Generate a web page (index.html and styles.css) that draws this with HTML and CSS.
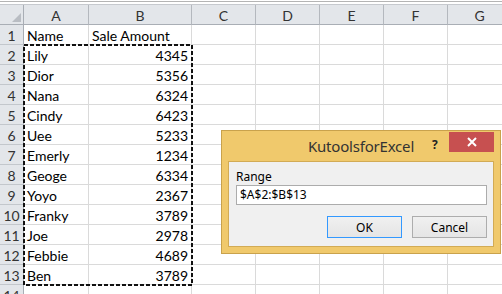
FILE: index.html
```html
<!DOCTYPE html>
<html lang="en">
<head>
  <meta charset="UTF-8">
  <title>KutoolsforExcel</title>
  <link rel="stylesheet" href="styles.css">
</head>
<body>
  <div class="sheet">
    <div class="topbar"></div>

    <div class="grid">
      <div class="corner"><span class="tri"></span></div>
      <div class="colhead">A</div>
      <div class="colhead">B</div>
      <div class="colhead">C</div>
      <div class="colhead">D</div>
      <div class="colhead">E</div>
      <div class="colhead">F</div>
      <div class="colhead">G</div>

      <div class="rowhead">1</div><div class="cell">Name</div><div class="cell">Sale Amount</div><div class="cell"></div><div class="cell"></div><div class="cell"></div><div class="cell"></div><div class="cell"></div>
      <div class="rowhead">2</div><div class="cell">Lily</div><div class="cell num">4345</div><div class="cell"></div><div class="cell"></div><div class="cell"></div><div class="cell"></div><div class="cell"></div>
      <div class="rowhead">3</div><div class="cell">Dior</div><div class="cell num">5356</div><div class="cell"></div><div class="cell"></div><div class="cell"></div><div class="cell"></div><div class="cell"></div>
      <div class="rowhead">4</div><div class="cell">Nana</div><div class="cell num">6324</div><div class="cell"></div><div class="cell"></div><div class="cell"></div><div class="cell"></div><div class="cell"></div>
      <div class="rowhead">5</div><div class="cell">Cindy</div><div class="cell num">6423</div><div class="cell"></div><div class="cell"></div><div class="cell"></div><div class="cell"></div><div class="cell"></div>
      <div class="rowhead">6</div><div class="cell">Uee</div><div class="cell num">5233</div><div class="cell"></div><div class="cell"></div><div class="cell"></div><div class="cell"></div><div class="cell"></div>
      <div class="rowhead">7</div><div class="cell">Emerly</div><div class="cell num">1234</div><div class="cell"></div><div class="cell"></div><div class="cell"></div><div class="cell"></div><div class="cell"></div>
      <div class="rowhead">8</div><div class="cell">Geoge</div><div class="cell num">6334</div><div class="cell"></div><div class="cell"></div><div class="cell"></div><div class="cell"></div><div class="cell"></div>
      <div class="rowhead">9</div><div class="cell">Yoyo</div><div class="cell num">2367</div><div class="cell"></div><div class="cell"></div><div class="cell"></div><div class="cell"></div><div class="cell"></div>
      <div class="rowhead">10</div><div class="cell">Franky</div><div class="cell num">3789</div><div class="cell"></div><div class="cell"></div><div class="cell"></div><div class="cell"></div><div class="cell"></div>
      <div class="rowhead">11</div><div class="cell">Joe</div><div class="cell num">2978</div><div class="cell"></div><div class="cell"></div><div class="cell"></div><div class="cell"></div><div class="cell"></div>
      <div class="rowhead">12</div><div class="cell">Febbie</div><div class="cell num">4689</div><div class="cell"></div><div class="cell"></div><div class="cell"></div><div class="cell"></div><div class="cell"></div>
      <div class="rowhead">13</div><div class="cell">Ben</div><div class="cell num">3789</div><div class="cell"></div><div class="cell"></div><div class="cell"></div><div class="cell"></div><div class="cell"></div>
      <div class="rowhead">14</div><div class="cell"></div><div class="cell"></div><div class="cell"></div><div class="cell"></div><div class="cell"></div><div class="cell"></div><div class="cell"></div>
    </div>

    <!-- copy marquee round A2:B13 -->
    <svg class="marquee" width="170" height="242">
      <rect x="1" y="1" width="168" height="240" fill="none" stroke="#111" stroke-width="2" stroke-dasharray="4 2"/>
    </svg>

    <div class="dialog">
      <div class="titlebar">
        <span class="title">KutoolsforExcel</span>
        <span class="help">?</span>
        <span class="close">
          <svg width="10" height="10" viewBox="0 0 10 10"><path d="M1 1 L9 9 M9 1 L1 9" stroke="#fff" stroke-width="2"/></svg>
        </span>
      </div>
      <div class="panel">
        <div class="label">Range</div>
        <div class="input">$A$2:$B$13</div>
        <div class="buttons">
          <div class="btn default">OK</div>
          <div class="btn">Cancel</div>
        </div>
      </div>
    </div>
  </div>
</body>
</html>
```

FILE: styles.css
```css
*{
  margin:0;
  padding:0;
  box-sizing: border-box;
}
body{
  width:502px;
  height:294px;
  overflow:hidden;
  background:#fff;
}
.sheet{
  position: relative;
  width:502px;
  height:294px;
  overflow:hidden;
  font-family: "Lato", "Liberation Sans", sans-serif;
}

.topbar{
  height:4px;
  border-top:1px solid #fff;
  border-bottom:1px solid #fff;
  background: linear-gradient(#b4b4b4 0 1px, #fff 1px);
}

.grid{
  display:grid;
  grid-template-columns: 24px 65px 103px 64px 64px 64px 64px 64px;
  grid-auto-rows: 20px;
  width:512px;
  border-top:1px solid #c6c9ce;
}

.corner, .colhead, .rowhead{
  background:#e3e6ea;
  color:#333;
  font-size:14px;
  display:flex;
  align-items:center;
  justify-content:center;
}
.corner{
  position: relative;
  border-right:1px solid #a9aeb5;
  border-bottom:1px solid #a9aeb5;
  height:20px;
}
.corner .tri{
  position:absolute;
  right:2px;
  bottom:2px;
  width:0;
  height:0;
  border-left:9px solid transparent;
  border-bottom:9px solid #b9bdc3;
}
.colhead{
  border-right:1px solid #b4b8be;
  border-bottom:1px solid #a9aeb5;
  padding-top:1px;
}
.rowhead{
  border-right:1px solid #a9aeb5;
  border-bottom:1px solid #c3c7cc;
  font-size:14px;
  padding-top:1px;
}

.cell{
  border-right:1px solid #dadada;
  border-bottom:1px solid #dadada;
  font-size:14px;
  color:#000;
  padding:2px 3px 0 3px;
  line-height:17px;
  white-space:nowrap;
  overflow:hidden;
}
.cell.num{
  text-align:right;
}

.marquee{
  position:absolute;
  left:23px;
  top:44px;
}

/* dialog floats over the sheet */
.dialog{
  position:absolute;
  left:221px;
  top:130px;
  width:280px;
  height:124px;
  background:#f0c96c;
  border:1px solid #c9a24c;
  font-family: "Noto Sans", "Open Sans", sans-serif;
  display:flex;
  flex-direction:column;
}
.titlebar{
  position:relative;
  height:30px;
  display:flex;
  align-items:center;
  justify-content:center;
}
.title{
  font-size:15px;
  color:#333;
  letter-spacing:-0.2px;
}
.help{
  position:absolute;
  left:210px;
  top:5px;
  font-size:12px;
  font-weight:bold;
  color:#222;
}
.close{
  position:absolute;
  left:227px;
  top:1px;
  width:45px;
  height:20px;
  background:#c75050;
  display:flex;
  align-items:center;
  justify-content:center;
}

.panel{
  margin:0 6px 6px 6px;
  flex:1;
  background:#f0f0f0;
  border:1px solid #d2ab55;
  padding:7px 6px 0 7px;
  font-size:12px;
  color:#000;
}
.label{
  line-height:15px;
  height:16px;
}
.input{
  height:20px;
  background:#fff;
  border:1px solid #acacac;
  padding-left:3px;
  line-height:18px;
  font-size:12px;
}
.buttons{
  display:flex;
  justify-content:flex-end;
  gap:10px;
  margin-top:11px;
}
.btn{
  width:75px;
  height:22px;
  border:1px solid #adadad;
  background:linear-gradient(#f0f0f0, #e5e5e5);
  display:flex;
  align-items:center;
  justify-content:center;
  font-size:12px;
}
.btn.default{
  border-color:#3399ff;
}
```
